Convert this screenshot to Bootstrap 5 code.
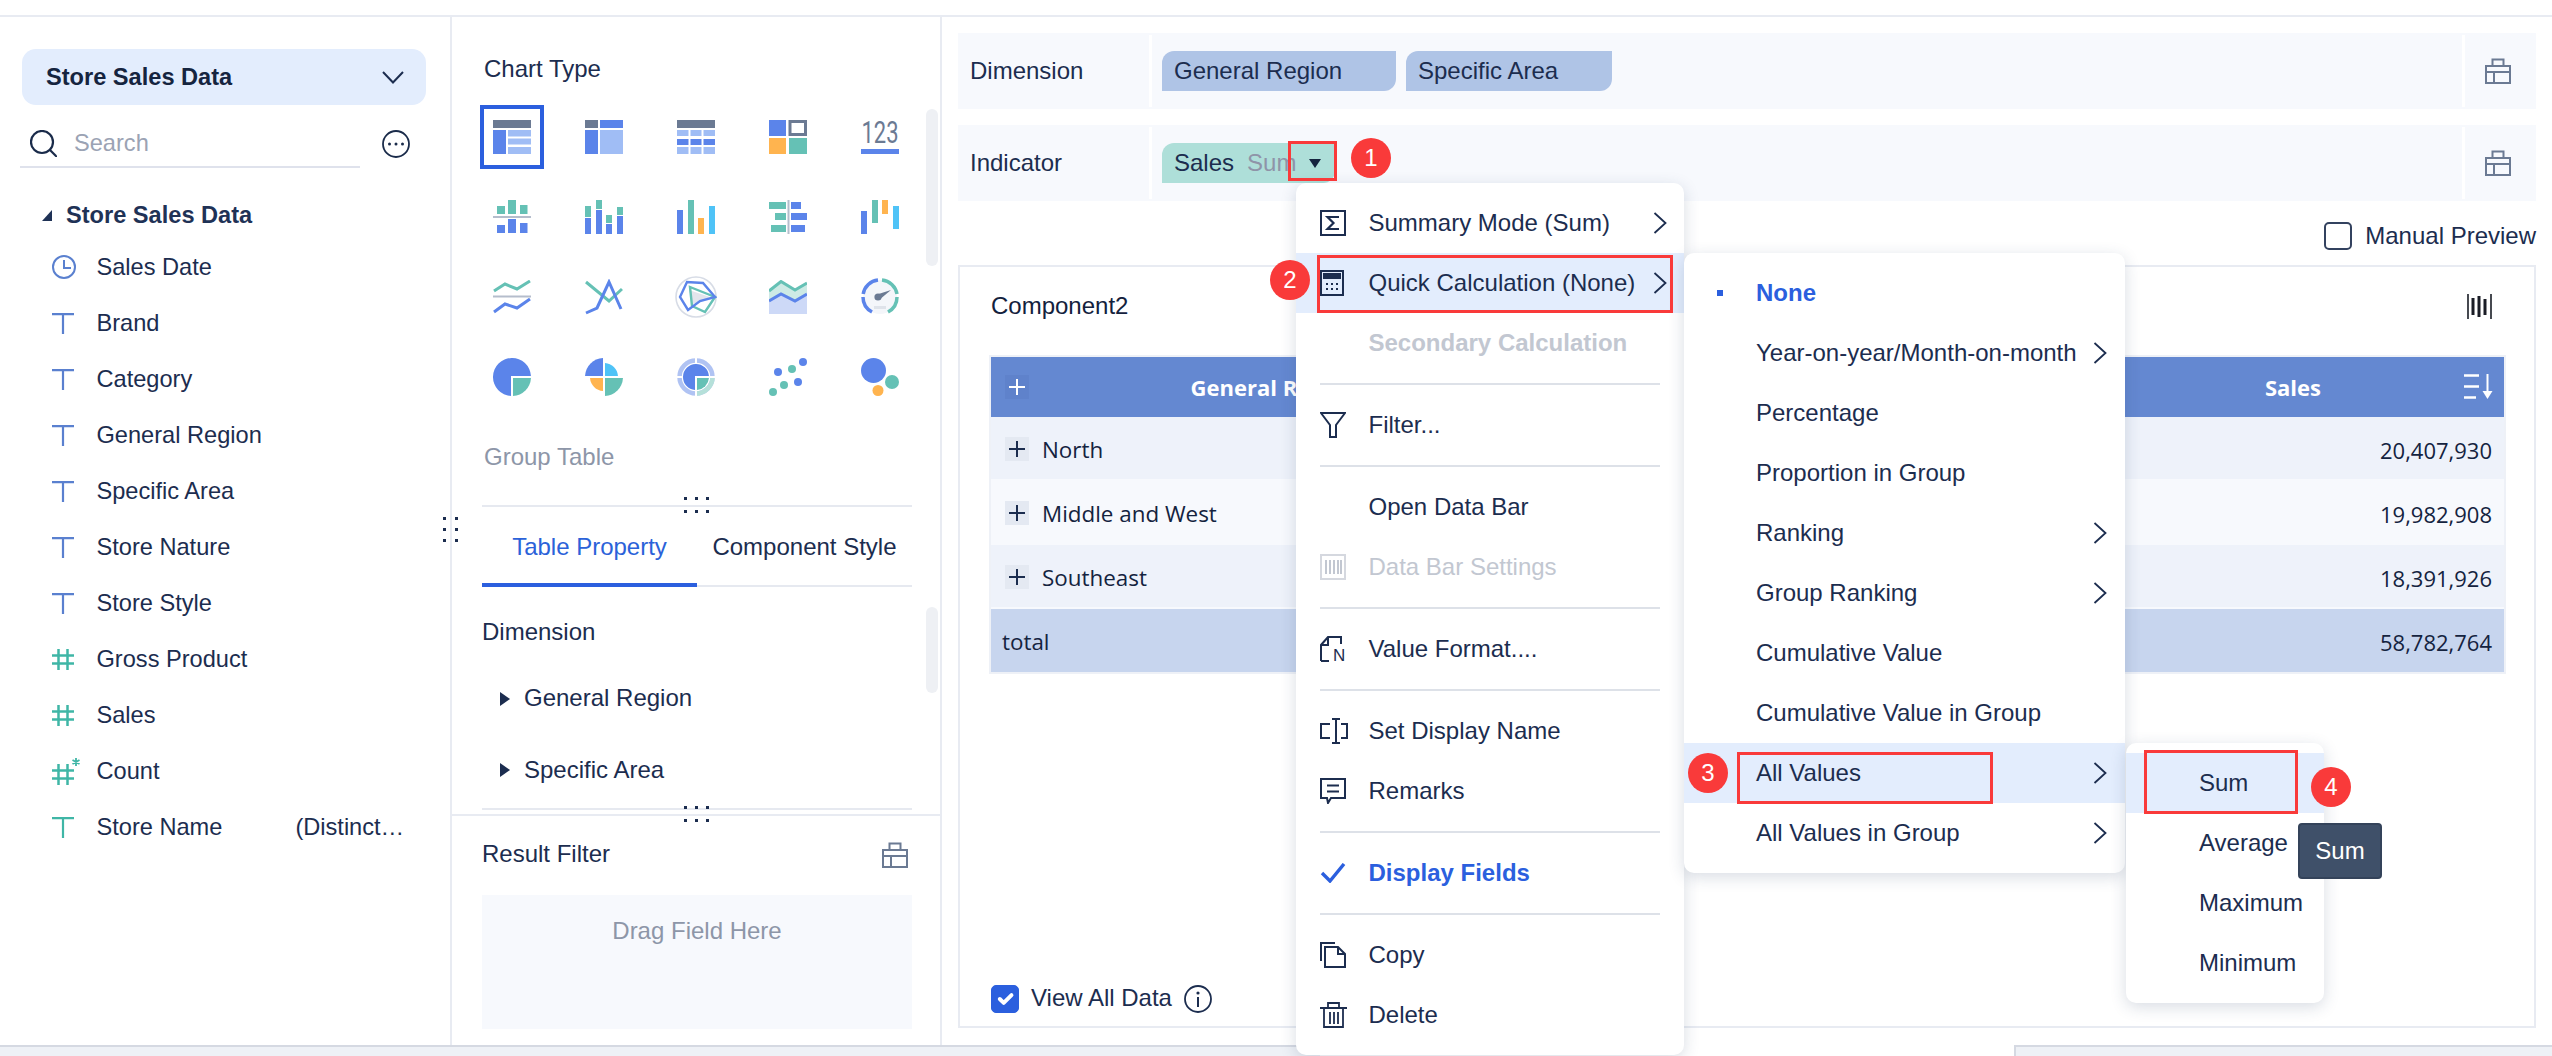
<!DOCTYPE html>
<html lang="en">
<head>
<meta charset="utf-8">
<title>Store Sales Data</title>
<link rel="stylesheet" href="https://cdn.jsdelivr.net/npm/bootstrap@5.3.0/dist/css/bootstrap.min.css">
<style>
html,body{margin:0;background:#fff;}
body{font-family:"Liberation Sans",Arial,sans-serif;font-size:24px;line-height:1.2;color:#1c2d4f;}
svg{display:block;flex:none;}
.app{position:relative;width:2552px;height:1056px;overflow:hidden;background:#fff;}
.topline{height:17px;border-bottom:2px solid #e8ebf2;}
.mainrow{height:1028px;}
.side{width:452px;border-right:2px solid #e8ebf2;position:relative;flex:none;font-size:23.6px;}
.picker{margin:32px 0 0 22px;width:404px;height:56px;background:#e3edfd;border-radius:14px;padding:0 22px 0 24px;font-weight:700;color:#15243f;}
.searchrow{margin-top:16px;}
.searchbox{margin-left:20px;width:340px;height:47px;border-bottom:2px solid #dfe2ec;padding-left:10px;gap:17px;color:#9ba3b4;}
.morebtn{margin-left:22px;margin-top:-2px;}
.treehead{margin:27px 0 0 42px;height:40px;gap:14px;font-weight:700;color:#1f3256;}
.treelist{margin-top:4px;}
.fieldrow{height:56px;padding-left:52px;}
.fieldico{width:44.5px;flex:none;}
.distinct{margin-left:73px;}
.handle{position:absolute;z-index:2;}
.h-side{left:443px;top:517px;}
.h-a{left:684px;top:497px;}
.h-b{left:684px;top:806px;}
.panel2{width:490px;border-right:2px solid #e8ebf2;position:relative;flex:none;}
.chartlabel{margin:32px 0 0 32px;height:40px;}
.chartgrid{display:grid;grid-template-columns:repeat(5,64px);grid-auto-rows:64px;gap:16px 28px;margin:16px 0 0 28px;}
.chartcell{display:flex;align-items:center;justify-content:center;}
.chartcell.picked{border:4px solid #2b5fde;}
.grouplabel{margin:28px 0 0 32px;height:40px;color:#8d96a8;}
.rule{margin:28px 28px 0 30px;height:2px;background:#e6e9f0;}
.tabline{margin:0 28px 0 30px;height:80px;border-bottom:2px solid #e6e9f0;}
.tabline .nav-link{width:215px;height:80px;padding:26px 0 0;text-align:center;color:#1c2d4f;font-size:24px;}
.tabline .nav-link.active{color:#2b62d9;border-bottom:4px solid #2b5fde;}
.dimlabel{margin:25px 0 0 30px;height:40px;}
.dimitem{height:71.6px;padding-left:48px;gap:14px;}
.dimfirst{margin-top:11px;}
.rule2{margin:2px 28px 0 30px;height:2px;background:#e6e9f0;}
.rule3{margin-top:4px;height:2px;background:#e8ebf2;}
.filterhead{margin:18.5px 28px 0 30px;height:40px;}
.dropzone{margin:20.5px 28px 0 30px;height:134px;background:#f7f9fd;color:#8d96a8;text-align:center;padding-top:22px;}
.scrollthumb{position:absolute;left:474px;width:12px;background:#eef0f4;border-radius:6px;}
.st-a{top:92px;height:157px;}
.st-b{top:590px;height:86px;}
.rightarea{flex:1;min-width:0;padding:16px 16px 0;}
.shelf{height:76px;background:#f7f9fd;}
.shelf+.shelf{margin-top:16px;}
.shelflabel{width:191px;padding-left:12px;flex:none;}
.shelfsep{width:3px;height:72px;background:#fff;flex:none;}
.shelfbody{padding-left:10px;gap:10px;}
.chip{height:40px;padding:0 12px;border-radius:12px 0 12px 0;}
.chip-a{width:234px;background:#afc4e6;}
.chip-b{width:206px;background:#afc4e6;}
.chip-c{width:173px;background:#aedfd9;}
.chipsub{color:#8f94a8;margin-left:13px;}
.chiptri{margin-left:13px;}
.shelfsep2{width:3px;height:72px;background:#fff;flex:none;margin-right:20px;}
.shelfico{margin-right:25px;}
.previewrow{height:64px;padding-top:6px;gap:13px;}
.boxchk{width:28px;height:28px;margin:0;border:2px solid #33425f;border-radius:5px;}
.compbox{height:763px;border:2px solid #e8ebf2;padding:0 31px 13px;}
.comphead{height:78px;margin-bottom:12px;padding-right:11px;color:#13213d;}
.datatbl{width:1513px;table-layout:fixed;border-collapse:separate;border-spacing:0;outline:2px solid #eef1f7;color:#14233f;font-family:"Open Sans",sans-serif;font-size:22px;}
.datatbl th{height:60px;background:#6488d1;color:#fff;font-weight:700;padding:0;}
.datatbl td{height:64px;padding:4px 12px 0 14px;border-bottom:2px solid #f7f9fd;}
.datatbl td.namecell{font-size:22.4px;}
.datatbl tr.odd td{background:#eef2fa;}
.datatbl tr.even td{background:#f7f9fd;}
.datatbl tr.sumrow td{background:#c7d5ee;padding-left:11px;height:63px;border-bottom:0;}
.plusbox{width:24px;height:24px;background:#e4e9f2;margin-right:13px;margin-top:-3px;flex:none;}
.datatbl .plushead{background:#5f82cb;margin:0 0 0 14px;}
.th-a{width:570px;}.th-b{width:521px;}.th-c{width:422px;}
.headtxt{flex:1;text-align:center;padding-right:42px;}
.datatbl th.salesth{padding:0 11px 0 0;}
.salestxt{flex:1;text-align:center;padding-left:40px;}
.viewall{gap:12px;}
.viewall .form-check-input{width:28px;height:28px;margin:0;border-radius:5px;background-color:#2b5fde;border-color:#2b5fde;opacity:1;}
.botstrip{height:11px;}
.botleft{width:1320px;border-top:2px solid #d5d9e2;background:#eef1f6;}
.botright{width:538px;margin-left:auto;border-top:2px solid #d5d9e2;border-left:2px solid #d5d9e2;background:#eef1f6;}
.dropdown-menu.ctx{position:absolute;display:block;z-index:5;padding:10px 0;margin:0;border:0;border-radius:10px;background:#fff;box-shadow:0 4px 16px rgba(40,60,100,.18);font-size:24px;}
.ctx .dropdown-item{height:60px;padding:0;display:flex;align-items:center;color:#1c2d4f;}
.ctx .dropdown-item.hot{background:#e3edfd;}
.ctx .dropdown-divider{margin:10px 24px;border-top:2px solid #dde1e8;opacity:1;}
.ctx .off{color:#c2c7d1;}
.ctx .pickedtxt{color:#2b5fde;font-weight:700;}
.m1{left:1296px;top:183px;width:388px;}
.m1 .dropdown-item{padding-left:24px;}
.m1 .icoslot{width:48.5px;flex:none;}
.m1 .chev{margin-left:auto;margin-right:17px;}
.m2{left:1684px;top:253px;width:441px;}
.m2 .dropdown-item{padding-left:72px;position:relative;}
.m2 .chev{margin-left:auto;margin-right:18px;}
.m3{left:2126px;top:743px;width:198px;}
.m3 .dropdown-item{padding-left:73px;}
.bulletsq{position:absolute;left:33px;top:27px;width:6px;height:6px;background:#2b5fde;}
.redbox{position:absolute;z-index:7;border:3px solid #f93a3a;}
.rb1{left:1288px;top:141px;width:49px;height:40px;}
.rb2{left:1317px;top:255px;width:356px;height:58px;}
.rb3{left:1737px;top:752px;width:256px;height:52px;}
.rb4{left:2144px;top:750px;width:154px;height:64px;}
.numdot{position:absolute;z-index:8;width:40px;height:40px;border-radius:50%;background:#f93a3a;color:#fff;display:flex;align-items:center;justify-content:center;font-size:24px;}
.nd1{left:1351px;top:138px;}
.nd2{left:1270px;top:260px;}
.nd3{left:1688px;top:753px;}
.nd4{left:2311px;top:767px;}
.sumtip{position:absolute;z-index:9;left:2298px;top:823px;width:84px;height:56px;background:#3f5069;border:2px solid #34435a;border-radius:4px;color:#fff;display:flex;align-items:center;justify-content:center;}
</style>
</head>
<body>
<svg width="0" height="0" class="position-absolute">
  <symbol id="i-t" viewBox="0 0 22 21"><path d="M0 1.2H22M11 1.2V21" fill="none" stroke="currentColor" stroke-width="2.2"/></symbol>
  <symbol id="i-h" viewBox="0 0 22 21"><path d="M0 6.5H22M0 14.5H22M6.5 0V21M15.5 0V21" fill="none" stroke="currentColor" stroke-width="2.5"/></symbol>
  <symbol id="i-chev" viewBox="0 0 14 22"><path d="M1.5 1L12.5 11L1.5 21" fill="none" stroke="#1c2d4f" stroke-width="1.8"/></symbol>
  <symbol id="i-tool" viewBox="0 0 26 26"><path d="M1 8H25V25H1ZM7.5 8V1.5H18.5V8M1 14H25M9 14V25" fill="none" stroke="#6b7a93" stroke-width="2"/></symbol>
  <symbol id="i-grip" viewBox="0 0 26 16"><path d="M0 0h3v3H0zM11 0h3v3h-3zM22 0h3v3h-3zM0 13h3v3H0zM11 13h3v3h-3zM22 13h3v3h-3z" fill="#1c2d4f"/></symbol>
</svg>
<div class="app">
  <div class="topline"></div>
  <div class="d-flex mainrow">
    <aside class="side">
      <div class="picker d-flex align-items-center justify-content-between"><span>Store Sales Data</span>
        <svg width="22" height="13" viewBox="0 0 22 13"><path d="M1 1L11 11.5L21 1" fill="none" stroke="#1c2d4f" stroke-width="2"/></svg></div>
      <div class="searchrow d-flex align-items-center">
        <div class="searchbox d-flex align-items-center">
          <svg width="27" height="27" viewBox="0 0 27 27"><circle cx="12" cy="12" r="11" fill="none" stroke="#1a2b4a" stroke-width="2.2"/><path d="M20 20L27 27" stroke="#1a2b4a" stroke-width="2.2"/></svg>
          <span>Search</span>
        </div>
        <svg class="morebtn" width="28" height="28" viewBox="0 0 28 28"><circle cx="14" cy="14" r="13" fill="none" stroke="#1a2b4a" stroke-width="1.8"/><circle cx="7.5" cy="14" r="1.5" fill="#1a2b4a"/><circle cx="14" cy="14" r="1.5" fill="#1a2b4a"/><circle cx="20.5" cy="14" r="1.5" fill="#1a2b4a"/></svg>
      </div>
      <div class="treehead d-flex align-items-center">
        <svg width="10" height="11" viewBox="0 0 10 11"><path d="M10 0V11H0Z" fill="#1f3256"/></svg>
        <span>Store Sales Data</span>
      </div>
      <div class="treelist">
        <div class="fieldrow d-flex align-items-center"><span class="fieldico"><svg width="24" height="24" viewBox="0 0 24 24"><circle cx="12" cy="12" r="11" fill="none" stroke="#5a80cf" stroke-width="2"/><path d="M12 5V13H19" fill="none" stroke="#5a80cf" stroke-width="2"/></svg></span>Sales Date</div>
        <div class="fieldrow d-flex align-items-center"><span class="fieldico"><svg width="22" height="21" color="#5a80cf"><use href="#i-t"/></svg></span>Brand</div>
        <div class="fieldrow d-flex align-items-center"><span class="fieldico"><svg width="22" height="21" color="#5a80cf"><use href="#i-t"/></svg></span>Category</div>
        <div class="fieldrow d-flex align-items-center"><span class="fieldico"><svg width="22" height="21" color="#5a80cf"><use href="#i-t"/></svg></span>General Region</div>
        <div class="fieldrow d-flex align-items-center"><span class="fieldico"><svg width="22" height="21" color="#5a80cf"><use href="#i-t"/></svg></span>Specific Area</div>
        <div class="fieldrow d-flex align-items-center"><span class="fieldico"><svg width="22" height="21" color="#5a80cf"><use href="#i-t"/></svg></span>Store Nature</div>
        <div class="fieldrow d-flex align-items-center"><span class="fieldico"><svg width="22" height="21" color="#5a80cf"><use href="#i-t"/></svg></span>Store Style</div>
        <div class="fieldrow d-flex align-items-center"><span class="fieldico"><svg width="22" height="21" color="#3fb6a6"><use href="#i-h"/></svg></span>Gross Product</div>
        <div class="fieldrow d-flex align-items-center"><span class="fieldico"><svg width="22" height="21" color="#3fb6a6"><use href="#i-h"/></svg></span>Sales</div>
        <div class="fieldrow d-flex align-items-center"><span class="fieldico"><svg width="28" height="27" viewBox="0 0 28 27" color="#3fb6a6"><path d="M0 12.5H22M0 20.5H22M6.5 6V27M15.5 6V27" fill="none" stroke="currentColor" stroke-width="2.5"/><path d="M24 0V8M20.5 2L27.5 6M27.5 2L20.5 6" fill="none" stroke="currentColor" stroke-width="1.8"/></svg></span>Count</div>
        <div class="fieldrow d-flex align-items-center"><span class="fieldico"><svg width="22" height="21" color="#3fb6a6"><use href="#i-t"/></svg></span>Store Name<span class="distinct">(Distinct…</span></div>
      </div>
    </aside>

    <section class="panel2">
      <div class="chartlabel d-flex align-items-center">Chart Type</div>
      <div class="chartgrid">
        <div class="chartcell picked"><svg width="38" height="34" viewBox="0 0 38 34"><rect width="38" height="8" fill="#6b7a93"/><rect y="10" width="13" height="24" fill="#5b84ea"/><rect x="15" y="10" width="23" height="6.5" fill="#a0bdf5"/><rect x="15" y="18.5" width="23" height="6" fill="#a0bdf5"/><rect x="15" y="27" width="23" height="7" fill="#a0bdf5"/></svg></div>
        <div class="chartcell"><svg width="38" height="34" viewBox="0 0 38 34"><rect width="13" height="8" fill="#6b7a93"/><rect x="15" width="23" height="8" fill="#5b84ea"/><rect y="10" width="13" height="24" fill="#5b84ea"/><rect x="15" y="10" width="23" height="24" fill="#a0bdf5"/></svg></div>
        <div class="chartcell"><svg width="38" height="34" viewBox="0 0 38 34"><rect width="38" height="8" fill="#6b7a93"/><path d="M0 10h11.5v6H0zM13.5 10h11v6h-11zM26.5 10H38v6H26.5zM0 27h11.5v7H0zM13.5 27h11v7h-11zM26.5 27H38v7H26.5z" fill="#a0bdf5"/><path d="M0 19h11.5v6H0zM13.5 19h11v6h-11zM26.5 19H38v6H26.5z" fill="#5b84ea"/></svg></div>
        <div class="chartcell"><svg width="38" height="34" viewBox="0 0 38 34"><rect width="17" height="16" fill="#5b84ea"/><rect x="21" y="1.5" width="15.5" height="13" fill="none" stroke="#6b7a93" stroke-width="3"/><rect y="18" width="17" height="16" fill="#ffb44f"/><rect x="20" y="18" width="18" height="16" fill="#65c1b5"/></svg></div>
        <div class="chartcell"><svg width="60" height="54" viewBox="-11 -10 60 54"><text x="19" y="22.5" text-anchor="middle" textLength="37" lengthAdjust="spacingAndGlyphs" font-family="Roboto,sans-serif" font-size="31" fill="#6b7a93">123</text><rect y="29" width="38" height="5" fill="#5b84ea"/></svg></div>

        <div class="chartcell"><svg width="38" height="34" viewBox="0 0 38 34"><path d="M4 6h8v8H4zM15 0h8v14h-8zM27 5h7.5v9H27z" fill="#65c1b5"/><rect y="16" width="38" height="2" fill="#b5bdcc"/><path d="M4 25h8v8H4zM15 19h8v14h-8zM27 23h7.5v10H27z" fill="#5b84ea"/></svg></div>
        <div class="chartcell"><svg width="38" height="34" viewBox="0 0 38 34"><path d="M0 6h6v11H0zM11 0h6v9h-6zM21 15h6v8h-6zM32 7h6v8h-6z" fill="#65c1b5"/><path d="M0 18h6v16H0zM11 10h6v24h-6zM21 24h6v10h-6zM32 16h6v18h-6z" fill="#5b84ea"/></svg></div>
        <div class="chartcell"><svg width="38" height="34" viewBox="0 0 38 34"><rect y="10" width="6" height="24" fill="#5b84ea"/><rect x="11" width="6" height="34" fill="#65c1b5"/><rect x="21" y="18" width="6" height="16" fill="#ffb44f"/><rect x="32" y="6" width="6" height="28" fill="#4fc3f7"/></svg></div>
        <div class="chartcell"><svg width="38" height="34" viewBox="0 0 38 34"><path d="M0 2h17v7H0zM6 13h11v7H6zM2 25h15v7H2z" fill="#65c1b5"/><rect x="18.5" width="2" height="34" fill="#b5bdcc"/><path d="M22 2h10v7H22zM22 13h16v7H22zM22 25h14v7H22z" fill="#5b84ea"/></svg></div>
        <div class="chartcell"><svg width="38" height="34" viewBox="0 0 38 34"><rect y="11" width="6" height="23" fill="#5b84ea"/><rect x="11" width="6" height="23" fill="#65c1b5"/><rect x="21" width="6" height="14" fill="#ffb44f"/><rect x="32" y="6" width="6" height="23" fill="#4fc3f7"/></svg></div>

        <div class="chartcell"><svg width="38" height="34" viewBox="0 0 38 34"><path d="M1 11L12 4L24 9L37 1" fill="none" stroke="#65c1b5" stroke-width="3"/><rect y="15.5" width="38" height="2" fill="#b5bdcc"/><path d="M1 32L12 24L24 28L37 19" fill="none" stroke="#5b84ea" stroke-width="3"/></svg></div>
        <div class="chartcell"><svg width="38" height="36" viewBox="0 0 38 36"><path d="M1 3L24 22L37 10" fill="none" stroke="#65c1b5" stroke-width="3"/><path d="M1 34L12 29L24 3L36 30" fill="none" stroke="#5b84ea" stroke-width="3"/></svg></div>
        <div class="chartcell"><svg width="42" height="42" viewBox="0 0 42 42"><circle cx="21" cy="21" r="20" fill="#fff" stroke="#d7dce6" stroke-width="1.6"/><path d="M14 14L35 21L18 28Z" fill="#e2e5ec"/><path d="M15 11L40 21L30 36L17 30Z" fill="none" stroke="#65c1b5" stroke-width="2.4"/><path d="M5 21L12 6L28 7L40 21L25 25L13 34Z" fill="none" stroke="#5b84ea" stroke-width="2.4"/></svg></div>
        <div class="chartcell"><svg width="38" height="34" viewBox="0 0 38 34"><path d="M0 11L12 1.5L26 10L38 3V13L26 21L12 14L0 21Z" fill="#cdeae5"/><path d="M0 11L12 1.5L26 10L38 3" fill="none" stroke="#65c1b5" stroke-width="3"/><path d="M0 21L12 14L26 21L38 14V34H0Z" fill="#cdd9f7"/><path d="M0 21L12 14L26 21L38 14" fill="none" stroke="#5b84ea" stroke-width="3"/></svg></div>
        <div class="chartcell"><svg width="38" height="38" viewBox="0 0 38 38"><circle cx="19" cy="19" r="17" fill="#f4f6fa"/><path d="M11 34A17 17 0 0 1 2 19M2.2 16A17 17 0 0 1 17 2" fill="none" stroke="#5b84ea" stroke-width="3.5"/><path d="M21 2A17 17 0 0 1 36 16M36 19A17 17 0 0 1 27 34" fill="none" stroke="#65c1b5" stroke-width="3.5"/><circle cx="17" cy="19" r="3.6" fill="#6b7a93"/><path d="M16 16.5L30 12L18 22Z" fill="#6b7a93"/><rect x="13" y="28" width="12" height="3" fill="#dfe3ea"/></svg></div>

        <div class="chartcell"><svg width="38" height="38" viewBox="0 0 38 38"><path d="M18 18H37.97A19 19 0 1 0 18 37.97Z" fill="#5b84ea"/><path d="M20 20H37.97A19 19 0 0 1 20 37.97Z" fill="#65c1b5"/></svg></div>
        <div class="chartcell"><svg width="38" height="38" viewBox="0 0 38 38"><path d="M18 18H.03A19 19 0 0 1 18 .03Z" fill="#5b84ea"/><path d="M20 18V5.03A14 14 0 0 1 32.97 18Z" fill="#4fc3f7"/><path d="M18 20H5.03A14 14 0 0 0 18 32.97Z" fill="#ffb44f"/><path d="M20 20H37.97A19 19 0 0 1 20 37.97Z" fill="#65c1b5"/></svg></div>
        <div class="chartcell"><svg width="38" height="38" viewBox="0 0 38 38"><circle cx="19" cy="19" r="16.5" fill="none" stroke="#b0c3f3" stroke-width="4.5"/><path d="M19 35.5A16.5 16.5 0 0 0 35.5 19" fill="none" stroke="#b5e0d9" stroke-width="4.5"/><path d="M18 18H31.96A13 13 0 1 0 18 31.96Z" fill="#5b84ea"/><path d="M20 20H31.96A13 13 0 0 1 20 31.96Z" fill="#65c1b5"/><path d="M19 0V6M19 32V38M0 19H6M32 19H38" stroke="#fff" stroke-width="2"/></svg></div>
        <div class="chartcell"><svg width="38" height="38" viewBox="0 0 38 38"><circle cx="34" cy="4" r="4" fill="#5b84ea"/><circle cx="23" cy="11" r="4" fill="#65c1b5"/><circle cx="9" cy="14" r="4" fill="#5b84ea"/><circle cx="29" cy="24" r="4" fill="#5b84ea"/><circle cx="15" cy="27" r="4" fill="#65c1b5"/><circle cx="4" cy="34" r="4" fill="#65c1b5"/></svg></div>
        <div class="chartcell"><svg width="38" height="38" viewBox="0 0 38 38"><circle cx="12.5" cy="12.5" r="12.5" fill="#5b84ea"/><circle cx="31" cy="24" r="7" fill="#65c1b5"/><circle cx="17" cy="32.5" r="5.5" fill="#ffb44f"/></svg></div>
      </div>
      <div class="grouplabel d-flex align-items-center">Group Table</div>
      <div class="rule"></div>
      <div class="tabline d-flex">
        <a class="nav-link active" href="#">Table Property</a>
        <a class="nav-link" href="#">Component Style</a>
      </div>
      <div class="dimlabel d-flex align-items-center">Dimension</div>
      <div class="dimitem dimfirst d-flex align-items-center"><svg width="10" height="14" viewBox="0 0 10 14"><path d="M0 0L10 7L0 14Z" fill="#1c2d4f"/></svg>General Region</div>
      <div class="dimitem d-flex align-items-center"><svg width="10" height="14" viewBox="0 0 10 14"><path d="M0 0L10 7L0 14Z" fill="#1c2d4f"/></svg>Specific Area</div>
      <div class="rule2"></div>
      <div class="rule3"></div>
      <div class="filterhead d-flex align-items-center justify-content-between"><span>Result Filter</span><svg width="26" height="26" class="me-1"><use href="#i-tool"/></svg></div>
      <div class="dropzone">Drag Field Here</div>
      <div class="scrollthumb st-a"></div>
      <div class="scrollthumb st-b"></div>
    </section>

    <main class="rightarea">
      <div class="shelf d-flex align-items-center">
        <div class="shelflabel">Dimension</div><div class="shelfsep"></div>
        <div class="shelfbody d-flex align-items-center flex-grow-1">
          <div class="chip chip-a d-flex align-items-center">General Region</div>
          <div class="chip chip-b d-flex align-items-center">Specific Area</div>
        </div>
        <div class="shelfsep2"></div><svg class="shelfico" width="26" height="26"><use href="#i-tool"/></svg>
      </div>
      <div class="shelf d-flex align-items-center">
        <div class="shelflabel">Indicator</div><div class="shelfsep"></div>
        <div class="shelfbody d-flex align-items-center flex-grow-1">
          <div class="chip chip-c d-flex align-items-center"><span>Sales</span><span class="chipsub">Sum</span><svg class="chiptri" width="12" height="9" viewBox="0 0 12 9"><path d="M0 0H12L6 9Z" fill="#15243f"/></svg></div>
        </div>
        <div class="shelfsep2"></div><svg class="shelfico" width="26" height="26"><use href="#i-tool"/></svg>
      </div>
      <div class="previewrow d-flex align-items-center justify-content-end"><span class="boxchk d-block"></span><span>Manual Preview</span></div>
      <div class="compbox d-flex flex-column">
        <div class="comphead d-flex align-items-center justify-content-between"><span>Component2</span>
          <svg width="25" height="25" viewBox="0 0 25 25"><path d="M1 0V25M24 0V25" stroke="#1a1d26" stroke-width="1.6"/><path d="M6 4V21M12 2V23M18 5V21" stroke="#1a1d26" stroke-width="3"/></svg></div>
        <table class="datatbl">
          <colgroup><col class="th-a"><col class="th-b"><col class="th-c"></colgroup>
          <thead><tr>
            <th><div class="d-flex align-items-center"><span class="plusbox plushead d-flex align-items-center justify-content-center"><svg width="16" height="16" viewBox="0 0 16 16"><path d="M8 0V16M0 8H16" stroke="#fff" stroke-width="2"/></svg></span><span class="headtxt">General Region</span></div></th>
            <th></th>
            <th class="salesth"><div class="d-flex align-items-center"><span class="salestxt">Sales</span>
              <svg width="29" height="25" viewBox="0 0 29 25"><path d="M0 1.5H15M0 12.5H15M0 23.5H12" stroke="#fff" stroke-width="2.6"/><path d="M23.5 0V20" stroke="#fff" stroke-width="2"/><path d="M18.5 17H28.5L23.5 25Z" fill="#fff"/></svg></div></th>
          </tr></thead>
          <tbody>
            <tr class="odd"><td class="namecell"><div class="d-flex align-items-center"><span class="plusbox d-flex align-items-center justify-content-center"><svg width="16" height="16" viewBox="0 0 16 16"><path d="M8 0V16M0 8H16" stroke="#1c2d4f" stroke-width="2"/></svg></span>North</div></td><td></td><td class="text-end">20,407,930</td></tr>
            <tr class="even"><td class="namecell"><div class="d-flex align-items-center"><span class="plusbox d-flex align-items-center justify-content-center"><svg width="16" height="16" viewBox="0 0 16 16"><path d="M8 0V16M0 8H16" stroke="#1c2d4f" stroke-width="2"/></svg></span>Middle and West</div></td><td></td><td class="text-end">19,982,908</td></tr>
            <tr class="odd"><td class="namecell"><div class="d-flex align-items-center"><span class="plusbox d-flex align-items-center justify-content-center"><svg width="16" height="16" viewBox="0 0 16 16"><path d="M8 0V16M0 8H16" stroke="#1c2d4f" stroke-width="2"/></svg></span>Southeast</div></td><td></td><td class="text-end">18,391,926</td></tr>
            <tr class="sumrow"><td class="namecell">total</td><td></td><td class="text-end">58,782,764</td></tr>
          </tbody>
        </table>
        <div class="viewall d-flex align-items-center mt-auto">
          <input class="form-check-input" type="checkbox" checked disabled aria-label="View All Data"><span>View All Data</span>
          <svg width="28" height="28" viewBox="0 0 28 28"><circle cx="14" cy="14" r="13" fill="none" stroke="#1c2d4f" stroke-width="1.8"/><circle cx="14" cy="8" r="1.6" fill="#1c2d4f"/><path d="M14 12V22" stroke="#1c2d4f" stroke-width="2"/></svg>
        </div>
      </div>
    </main>
  </div>
  <div class="botstrip d-flex"><div class="botleft"></div><div class="botright"></div></div>

  <svg class="handle h-side" width="16" height="28" viewBox="0 0 16 28"><path d="M0 0h3v3H0zM12 0h3v3h-3zM0 11h3v3H0zM12 11h3v3h-3zM0 22h3v3H0zM12 22h3v3h-3z" fill="#1c2d4f"/></svg>
  <svg class="handle h-a" width="26" height="16"><use href="#i-grip"/></svg>
  <svg class="handle h-b" width="26" height="16"><use href="#i-grip"/></svg>

  <ul class="dropdown-menu ctx m1 list-unstyled">
    <li><a class="dropdown-item" href="#"><span class="icoslot"><svg width="26" height="26" viewBox="0 0 26 26"><rect x="1" y="1" width="24" height="24" fill="none" stroke="#1c2d4f" stroke-width="2"/><path d="M19 7H7.5L13.5 13L7.5 19H19" fill="none" stroke="#1c2d4f" stroke-width="2.2"/></svg></span>Summary Mode (Sum)<svg class="chev" width="14" height="22"><use href="#i-chev"/></svg></a></li>
    <li><a class="dropdown-item hot" href="#"><span class="icoslot"><svg width="24" height="26" viewBox="0 0 24 26"><rect x="1" y="1" width="22" height="24" fill="none" stroke="#1c2d4f" stroke-width="2"/><rect x="3" y="3" width="18" height="6" fill="#1c2d4f"/><path d="M6 13h2v2H6zM11 13h2v2h-2zM16 13h2v2h-2zM6 18h2v2H6zM11 18h2v2h-2zM16 18h2v2h-2z" fill="#1c2d4f"/></svg></span>Quick Calculation (None)<svg class="chev" width="14" height="22"><use href="#i-chev"/></svg></a></li>
    <li><a class="dropdown-item" href="#"><span class="icoslot"></span><span class="off fw-bold">Secondary Calculation</span></a></li>
    <li><hr class="dropdown-divider"></li>
    <li><a class="dropdown-item" href="#"><span class="icoslot"><svg width="26" height="26" viewBox="0 0 26 26"><path d="M1 1H25L16 13V25L10 25V13Z" fill="none" stroke="#1c2d4f" stroke-width="2"/></svg></span>Filter...</a></li>
    <li><hr class="dropdown-divider"></li>
    <li><a class="dropdown-item" href="#"><span class="icoslot"></span>Open Data Bar</a></li>
    <li><a class="dropdown-item" href="#"><span class="icoslot"><svg width="26" height="26" viewBox="0 0 26 26"><rect x="1" y="1" width="24" height="24" fill="none" stroke="#d5d8df" stroke-width="2"/><path d="M6 6V20M10 6V20M14 6V20M18 6V20M21 6V20" stroke="#c2c7d1" stroke-width="2"/></svg></span><span class="off">Data Bar Settings</span></a></li>
    <li><hr class="dropdown-divider"></li>
    <li><a class="dropdown-item" href="#"><span class="icoslot"><svg width="27" height="34" viewBox="0 0 27 34"><path d="M1 29V13L8 5H21V12M1 29H9M8 5V13H1" fill="none" stroke="#1c2d4f" stroke-width="2"/><text x="13" y="29" font-family="Liberation Sans,sans-serif" font-size="17" fill="#1c2d4f">N</text></svg></span>Value Format....</a></li>
    <li><hr class="dropdown-divider"></li>
    <li><a class="dropdown-item" href="#"><span class="icoslot"><svg width="28" height="26" viewBox="0 0 28 26"><path d="M10 6H1V20H10M21 6H27V20H21" fill="none" stroke="#1c2d4f" stroke-width="2"/><path d="M12 1H20M16 1V25M12 25H20" fill="none" stroke="#1c2d4f" stroke-width="2"/></svg></span>Set Display Name</a></li>
    <li><a class="dropdown-item" href="#"><span class="icoslot"><svg width="26" height="26" viewBox="0 0 26 26"><path d="M1 1H25V20H11L8 25L7 20H1Z" fill="none" stroke="#1c2d4f" stroke-width="2"/><path d="M7 7.5H19M7 13.5H19" stroke="#1c2d4f" stroke-width="2"/></svg></span>Remarks</a></li>
    <li><hr class="dropdown-divider"></li>
    <li><a class="dropdown-item" href="#"><span class="icoslot"><svg width="26" height="20" viewBox="0 0 26 20"><path d="M2 10L10 18L24 1" fill="none" stroke="#2b5fde" stroke-width="3.4"/></svg></span><span class="pickedtxt">Display Fields</span></a></li>
    <li><hr class="dropdown-divider"></li>
    <li><a class="dropdown-item" href="#"><span class="icoslot"><svg width="26" height="26" viewBox="0 0 26 26"><path d="M1 19V1H15" fill="none" stroke="#1c2d4f" stroke-width="2"/><path d="M5 5H18L25 12V25H5ZM18 5V12H25" fill="none" stroke="#1c2d4f" stroke-width="2"/></svg></span>Copy</a></li>
    <li><a class="dropdown-item" href="#"><span class="icoslot"><svg width="27" height="26" viewBox="0 0 27 26"><path d="M0 6H27M8 6V1H19V6M4 6V25H23V6M10 10V22M14 10V22M18 10V22" fill="none" stroke="#1c2d4f" stroke-width="1.8"/></svg></span>Delete</a></li>
  </ul>

  <ul class="dropdown-menu ctx m2 list-unstyled">
    <li><a class="dropdown-item" href="#"><span class="bulletsq"></span><span class="pickedtxt">None</span></a></li>
    <li><a class="dropdown-item" href="#">Year-on-year/Month-on-month<svg class="chev" width="14" height="22"><use href="#i-chev"/></svg></a></li>
    <li><a class="dropdown-item" href="#">Percentage</a></li>
    <li><a class="dropdown-item" href="#">Proportion in Group</a></li>
    <li><a class="dropdown-item" href="#">Ranking<svg class="chev" width="14" height="22"><use href="#i-chev"/></svg></a></li>
    <li><a class="dropdown-item" href="#">Group Ranking<svg class="chev" width="14" height="22"><use href="#i-chev"/></svg></a></li>
    <li><a class="dropdown-item" href="#">Cumulative Value</a></li>
    <li><a class="dropdown-item" href="#">Cumulative Value in Group</a></li>
    <li><a class="dropdown-item hot" href="#">All Values<svg class="chev" width="14" height="22"><use href="#i-chev"/></svg></a></li>
    <li><a class="dropdown-item" href="#">All Values in Group<svg class="chev" width="14" height="22"><use href="#i-chev"/></svg></a></li>
  </ul>

  <ul class="dropdown-menu ctx m3 list-unstyled">
    <li><a class="dropdown-item hot" href="#">Sum</a></li>
    <li><a class="dropdown-item" href="#">Average</a></li>
    <li><a class="dropdown-item" href="#">Maximum</a></li>
    <li><a class="dropdown-item" href="#">Minimum</a></li>
  </ul>

  <div class="redbox rb1"></div>
  <div class="redbox rb2"></div>
  <div class="redbox rb3"></div>
  <div class="redbox rb4"></div>
  <div class="numdot nd1">1</div>
  <div class="numdot nd2">2</div>
  <div class="numdot nd3">3</div>
  <div class="numdot nd4">4</div>
  <div class="sumtip">Sum</div>
</div>
<script src="https://cdn.jsdelivr.net/npm/bootstrap@5.3.0/dist/js/bootstrap.bundle.min.js"></script>
</body>
</html>
